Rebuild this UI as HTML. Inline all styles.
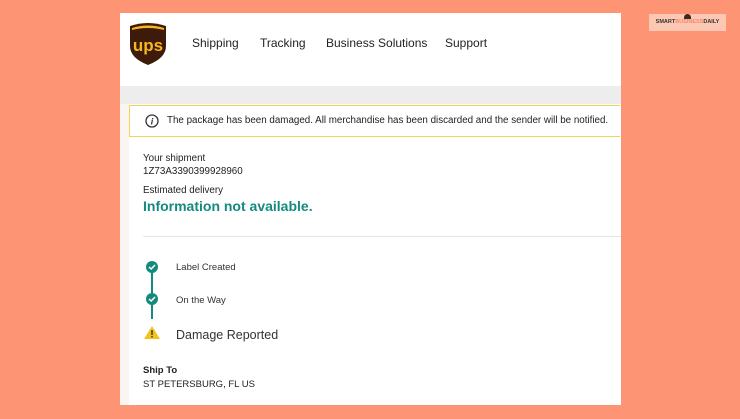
<!DOCTYPE html>
<html><head><style>
body{margin:0;width:740px;height:419px;background:#fd9473;position:relative;overflow:hidden;font-family:"Liberation Sans",sans-serif;}
.card{position:absolute;left:120px;top:13px;width:501px;height:392px;background:#faf4f2;}
.hdr{position:absolute;left:0;top:0;width:501px;height:73px;background:#fff;}
.band{position:absolute;left:0;top:73px;width:501px;height:18px;background:#ededed;}
.body{position:absolute;left:9px;top:91px;width:492px;height:301px;background:#fff;}
.nav{position:absolute;top:23px;font-size:12px;color:#222;}
.alert{position:absolute;left:9px;top:92px;width:490px;height:30px;border:1.5px solid #f2d35a;border-right:none;background:#fff;font-size:9.8px;color:#222;}
.t{position:absolute;color:#222;}
</style></head><body>
<div class="card">
<div class="hdr">
<svg style="position:absolute;left:9px;top:8px" width="38" height="45" viewBox="0 0 38 45"><path d="M1 5 Q19 -1 37 5 L37 25 Q37 37 19 44 Q1 37 1 25Z" fill="#3d1a0a"/><path d="M3 7 Q19 2 35 7 L35 9 Q19 5 3 9Z" fill="#f6b81c"/><text x="19" y="30" font-size="17" font-weight="bold" fill="#f6b81c" text-anchor="middle" font-family="Liberation Sans">ups</text></svg>
<div class="nav" style="left:72px">Shipping</div>
<div class="nav" style="left:140px">Tracking</div>
<div class="nav" style="left:206px">Business Solutions</div>
<div class="nav" style="left:325px">Support</div>
</div>
<div class="band"></div>
<div class="body"></div>
<div class="alert">
<svg style="position:absolute;left:15px;top:8px" width="14" height="14"><circle cx="7" cy="7" r="6" fill="none" stroke="#333" stroke-width="1.3"/><text x="7" y="10.5" font-size="9" font-style="italic" font-weight="bold" text-anchor="middle" fill="#333">i</text></svg>
<div style="position:absolute;left:37px;top:9px">The package has been damaged. All merchandise has been discarded and the sender will be notified.</div>
</div>
<div class="t" style="left:23px;top:140px;font-size:9.8px">Your shipment</div>
<div class="t" style="left:23px;top:153px;font-size:9.8px">1Z73A3390399928960</div>
<div class="t" style="left:23px;top:172px;font-size:9.8px">Estimated delivery</div>
<div class="t" style="left:23px;top:185px;font-size:14px;font-weight:bold;color:#148a7f">Information not available.</div>
<div style="position:absolute;left:23px;top:223px;width:478px;height:1px;background:#e6e6e6"></div>
<div style="position:absolute;left:31px;top:256px;width:2px;height:50px;background:#148a7f"></div>
<svg style="position:absolute;left:26px;top:248px" width="12" height="12"><circle cx="6" cy="6" r="6" fill="#148a7f"/><path d="M3 6 L5.2 8 L9 4" stroke="#fff" stroke-width="1.5" fill="none"/></svg>
<svg style="position:absolute;left:26px;top:280px" width="12" height="12"><circle cx="6" cy="6" r="6" fill="#148a7f"/><path d="M3 6 L5.2 8 L9 4" stroke="#fff" stroke-width="1.5" fill="none"/></svg>
<svg style="position:absolute;left:24px;top:313px" width="16" height="13"><path d="M8 0 L16 13 L0 13Z" fill="#f4c21b"/><rect x="7.3" y="4" width="1.4" height="5" fill="#333"/><rect x="7.3" y="10" width="1.4" height="1.4" fill="#333"/></svg>
<div class="t" style="left:56px;top:249px;font-size:9.5px;color:#333">Label Created</div>
<div class="t" style="left:56px;top:282px;font-size:9.5px;color:#333">On the Way</div>
<div class="t" style="left:56px;top:315px;font-size:12.5px;color:#333">Damage Reported</div>
<div class="t" style="left:23px;top:352px;font-size:9.5px;font-weight:bold">Ship To</div>
<div class="t" style="left:23px;top:366px;font-size:9.5px">ST PETERSBURG, FL US</div>
</div>
<div style="position:absolute;left:649px;top:14px;width:77px;height:17px;background:#fcc8b4;font-size:5.5px;font-weight:bold;line-height:17px;text-align:center;color:#333">SMART<span style="color:#f08a6a">BUSINESS</span>DAILY</div>
<div style="position:absolute;left:684px;top:14px;width:7px;height:5px;border-radius:4px 4px 0 0;background:#3a2a22"></div>
</body></html>
